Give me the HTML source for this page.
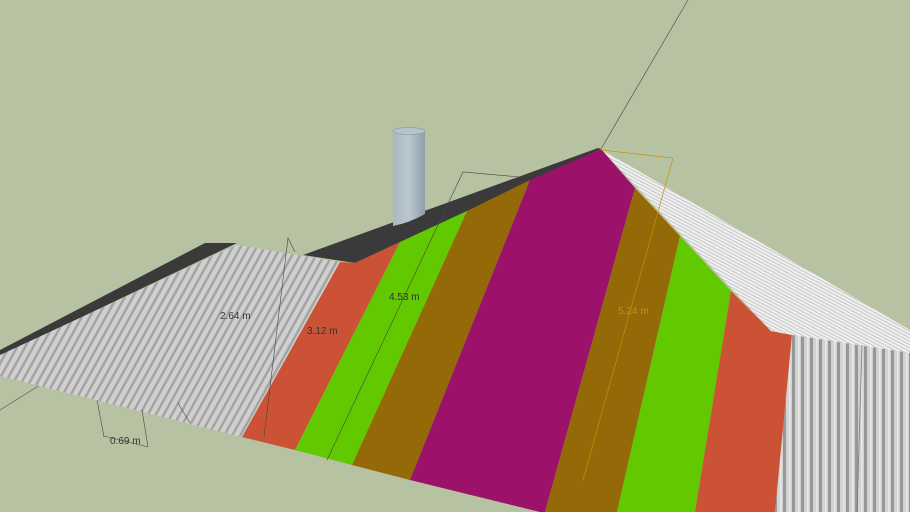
<!DOCTYPE html>
<html><head><meta charset="utf-8"><style>
html,body{margin:0;padding:0;background:#b7c2a2;}
svg{display:block}
text{font-family:"Liberation Sans",sans-serif;font-size:10px;}
</style></head><body>
<svg width="910" height="512" viewBox="0 0 910 512" xmlns="http://www.w3.org/2000/svg">
<defs>
<pattern id="corr" width="7" height="10" patternUnits="userSpaceOnUse" patternTransform="rotate(29)">
<rect width="7" height="10" fill="#d0d0d0"/><rect x="0" width="2.5" height="10" fill="#a4a4a4"/>
</pattern>
<pattern id="corr2" width="9" height="10" patternUnits="userSpaceOnUse">
<rect width="9" height="10" fill="#d2d2d2"/><rect x="0" width="3" height="10" fill="#979797"/><rect x="6" width="1.5" height="10" fill="#e8e8e8"/>
</pattern>
<pattern id="wht" width="10" height="3" patternUnits="userSpaceOnUse" patternTransform="rotate(28)">
<rect width="10" height="3" fill="#efefef"/><rect y="0" width="10" height="0.6" fill="#b0b0b0"/>
</pattern>
<linearGradient id="ch" x1="0" x2="1"><stop offset="0" stop-color="#a8b8c4"/><stop offset="0.5" stop-color="#b9c7d0"/><stop offset="1" stop-color="#8e9ea9"/></linearGradient>
</defs>
<rect width="910" height="512" fill="#b7c2a2"/>
<line x1="601" y1="149" x2="688" y2="0" stroke="#555" stroke-width="0.7"/>
<line x1="0" y1="410" x2="40" y2="385" stroke="#555" stroke-width="0.7"/>
<polygon points="0,350 205,243 237,243 0,356" fill="#3a3a3a"/>
<polygon points="303,255 598,148 601,149 355,263" fill="#3a3a3a"/>
<polygon points="0,355 237,245 340,262 242,437 0,376" fill="url(#corr)"/>
<polygon points="340,262 355,263 400,242 295,450 242,437" fill="#cc5236"/>
<polygon points="400,242 467,211 352,465 295,450" fill="#62c800"/>
<polygon points="467,211 530,180 410,480 352,465" fill="#936a07"/>
<polygon points="530,180 601,149 635,188 545,512 540,512 410,480" fill="#9c116a"/>
<polygon points="635,188 680,236 617,512 545,512" fill="#936a07"/>
<polygon points="680,236 731,291 695,512 617,512" fill="#62c800"/>
<polygon points="731,291 771,331 792,335 775,512 695,512" fill="#cc5236"/>
<polygon points="601,149 910,330 910,353 792,335 771,331" fill="url(#wht)"/>
<polygon points="792,335 910,353 910,512 775,512" fill="url(#corr2)"/>
<line x1="862" y1="345" x2="857" y2="512" stroke="#777" stroke-width="0.8"/>
<path d="M393,131 L393,226 Q409,223 425,214 L425,131 Z" fill="url(#ch)"/>
<ellipse cx="409" cy="131" rx="16" ry="3.5" fill="#b5c3cc" stroke="#8f9ea8" stroke-width="0.8"/>
<g stroke="#444" stroke-width="0.6" fill="none">
<polyline points="264,437 288,238 295,252"/>
<polyline points="327,460 463,172 520,177"/>
<line x1="178" y1="403" x2="190" y2="423"/>
<line x1="97" y1="400" x2="104" y2="437"/>
<line x1="142" y1="410" x2="148" y2="447"/>
<line x1="104" y1="436" x2="148" y2="447"/>
</g>
<g stroke="#c9900a" stroke-width="0.7" fill="none">
<polyline points="601,150 673,158 583,480"/>
</g>
<text x="220" y="319" fill="#333">2.64 m</text>
<text x="307" y="334" fill="#333">3.12 m</text>
<text x="389" y="300" fill="#333">4.53 m</text>
<text x="618" y="314" fill="#c9900a">5.24 m</text>
<text x="110" y="444" fill="#333">0.69 m</text>
</svg>
</body></html>
